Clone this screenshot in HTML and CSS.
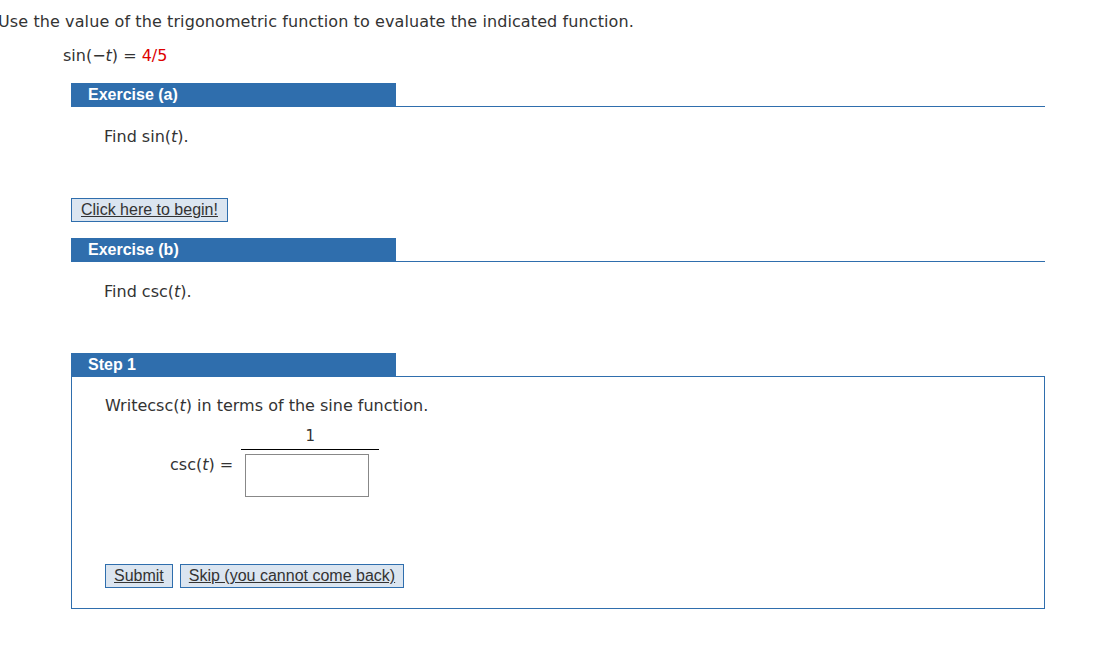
FILE: index.html
```html
<!DOCTYPE html>
<html lang="en">
<head>
    <meta charset="UTF-8">
    <title>Trigonometric function</title>
    <link rel="stylesheet" href="styles.css">
</head>
<body>
    <div class="question">
        <p class="intro">Use the value of the trigonometric function to evaluate the indicated function.</p>
        <p class="given">sin(&minus;<i>t</i>) = <span class="value">4/5</span></p>

        <div class="part">
            <div class="part-head"><span class="tab">Exercise (a)</span></div>
            <p class="part-text">Find sin(<i>t</i>).</p>
            <button class="btn begin">Click here to begin!</button>
        </div>

        <div class="part">
            <div class="part-head"><span class="tab">Exercise (b)</span></div>
            <p class="part-text">Find csc(<i>t</i>).</p>
        </div>

        <div class="step">
            <div class="step-head"><span class="tab">Step 1</span></div>
            <div class="step-box">
                <p class="step-text">Writecsc(<i>t</i>) in terms of the sine function.</p>
                <div class="equation">
                    <span class="lhs">csc(<i>t</i>) =</span>
                    <span class="fraction">
                        <span class="numer">1</span>
                        <span class="denom"><input type="text" class="answer"></span>
                    </span>
                </div>
                <div class="actions">
                    <button class="btn">Submit</button>
                    <button class="btn">Skip (you cannot come back)</button>
                </div>
            </div>
        </div>
    </div>
</body>
</html>
```

FILE: styles.css
```css
body {
    margin: 0;
    font-family: "DejaVu Sans", Verdana, sans-serif;
    font-size: 16px;
    color: #333;
    background: #fff;
}
.question {
    width: 974px;
    padding-left: 71px;
    padding-top: 12px;
}
.intro {
    margin: 0 0 0 -73px;
    line-height: 20px;
    letter-spacing: 0.1px;
}
.given {
    margin: 14px 0 0 -8px;
    line-height: 20px;
}
.value {
    color: #d00;
}
i {
    font-style: italic;
}
.part {
    margin-top: 17px;
}
.part + .part {
    margin-top: 16px;
}
.part-head,
.step-head {
    display: flex;
    border-bottom: 1px solid #2f6ead;
}
.tab {
    width: 308px;
    height: 23px;
    line-height: 23px;
    padding-left: 17px;
    background: #2f6ead;
    color: #fff;
    font-family: "Liberation Sans", Arial, sans-serif;
    font-weight: bold;
    font-size: 16px;
}
.part-text {
    margin: 20px 0 0 33px;
    line-height: 20px;
}
.btn {
    font-family: "Liberation Sans", Arial, sans-serif;
    font-size: 16px;
    color: #333;
    text-decoration: underline;
    background: #dbe5f0;
    border: 1px solid #2f6ead;
    padding: 0 8px;
    height: 24px;
    line-height: 22px;
    cursor: pointer;
}
.begin {
    margin-top: 51px;
    display: block;
    padding: 0 9px;
}
.step {
    margin-top: 51px;
}
.step-head {
    border-bottom: none;
}
.step-box {
    border: 1px solid #2f6ead;
    height: 231px;
    padding: 0 33px;
}
.step-text {
    margin: 19px 0 0 0;
    line-height: 20px;
}
.equation {
    display: flex;
    align-items: flex-end;
    margin: 11px 0 0 65px;
}
.lhs {
    margin-right: 8px;
    padding-bottom: 23px;
}
.fraction {
    display: flex;
    flex-direction: column;
    align-items: center;
}
.numer {
    font-size: 15px;
    line-height: 18px;
    padding-bottom: 4px;
    width: 138px;
    text-align: center;
    border-bottom: 1px solid #000;
}
.denom {
    padding-top: 4px;
}
.answer {
    display: block;
    width: 124px;
    height: 43px;
    box-sizing: border-box;
    border: 1px solid #888;
    margin: 0 6px 0 0;
}
.actions {
    display: flex;
    gap: 7px;
    margin-top: 67px;
}
.actions .btn {
    display: block;
}
```
